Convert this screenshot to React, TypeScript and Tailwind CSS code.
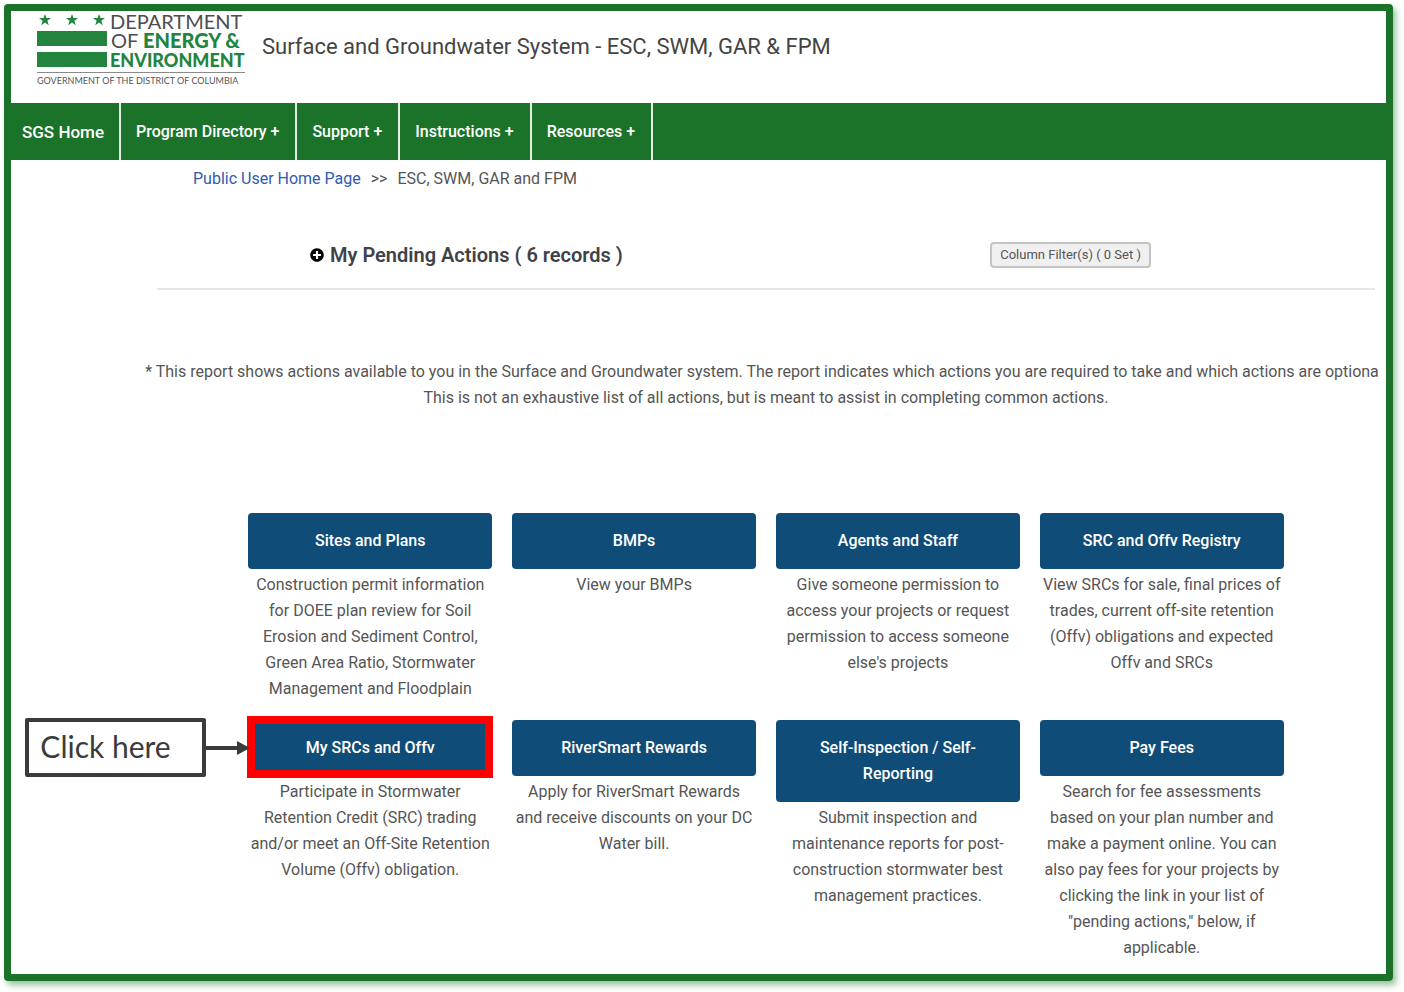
import { FaPlusCircle } from "react-icons/fa";

const NAV_ITEMS = [
  "Program Directory +",
  "Support +",
  "Instructions +",
  "Resources +",
];

const PROGRAMS = [
  {
    title: "Sites and Plans",
    desc: "Construction permit information for DOEE plan review for Soil Erosion and Sediment Control, Green Area Ratio, Stormwater Management and Floodplain",
  },
  { title: "BMPs", desc: "View your BMPs" },
  {
    title: "Agents and Staff",
    desc: "Give someone permission to access your projects or request permission to access someone else's projects",
  },
  {
    title: "SRC and Offv Registry",
    desc: "View SRCs for sale, final prices of trades, current off-site retention (Offv) obligations and expected Offv and SRCs",
  },
  {
    title: "My SRCs and Offv",
    desc: "Participate in Stormwater Retention Credit (SRC) trading and/or meet an Off-Site Retention Volume (Offv) obligation.",
    highlight: true,
  },
  {
    title: "RiverSmart Rewards",
    desc: "Apply for RiverSmart Rewards and receive discounts on your DC Water bill.",
  },
  {
    title: "Self-Inspection / Self-Reporting",
    desc: "Submit inspection and maintenance reports for post-construction stormwater best management practices.",
  },
  {
    title: "Pay Fees",
    desc: 'Search for fee assessments based on your plan number and make a payment online. You can also pay fees for your projects by clicking the link in your list of "pending actions," below, if applicable.',
  },
];

const STAR = "M0 -6 L1.5 -2 L6 -2 L2.4 0.8 L3.7 5.2 L0 2.6 L-3.7 5.2 L-2.4 0.8 L-6 -2 L-1.5 -2 Z";

function Logo() {
  return (
    <svg
      width="210"
      height="76"
      viewBox="0 0 210 76"
      fontFamily="Lato, sans-serif"
      role="img"
      aria-label="Department of Energy and Environment"
    >
      <g fill="#23843f">
        {[9, 36, 63].map((x) => (
          <path key={x} d={STAR} transform={`translate(${x} 9)`} />
        ))}
        <rect x="1" y="20" width="70" height="15" />
        <rect x="1" y="41" width="70" height="15" />
      </g>
      <g fill="#4d4d4f" fontSize="20">
        <text x="74" y="18">DEPARTMENT</text>
        <text x="75" y="37">
          OF <tspan fill="#23843f" fontWeight="900">ENERGY &amp;</tspan>
        </text>
        <text x="74" y="56" fill="#23843f" fontWeight="900" fontSize="18">
          ENVIRONMENT
        </text>
      </g>
      <rect x="1" y="61" width="208" height="1" fill="#8a8a8a" />
      <text x="1" y="73" fontSize="9" fill="#555">
        GOVERNMENT OF THE DISTRICT OF COLUMBIA
      </text>
    </svg>
  );
}

function Callout() {
  return (
    <div className="absolute right-full top-0 flex items-center -mt-0.5 -mr-0.5 w-[225px] pointer-events-none z-10">
      <div className="w-[181px] h-[59px] border-4 border-[#3b3b3b] rounded-xs bg-white pl-[11px] pb-1 flex items-center font-[Lato] text-[30px] text-[#3b3b3b]">
        Click here
      </div>
      <svg width="44" height="16" viewBox="0 0 44 16" fill="#3b3b3b">
        <rect x="0" y="6" width="33" height="4" />
        <path d="M31 1 L44 8 L31 15 Z" />
      </svg>
    </div>
  );
}

function ProgramCard({
  title,
  desc,
  highlight,
}: {
  title: string;
  desc: string;
  highlight?: boolean;
}) {
  return (
    <div className="relative text-center">
      <button className="w-full min-h-14 px-8 py-[15px] rounded bg-[#104c78] text-white font-medium">
        {title}
      </button>
      <p className="mt-[3px] px-px">{desc}</p>
      {highlight && (
        <>
          <div className="absolute -inset-x-px -top-1 h-[62px] border-8 border-[#ff0000] pointer-events-none" />
          <Callout />
        </>
      )}
    </div>
  );
}

export default function App() {
  return (
    <div className="min-h-screen bg-white pt-1 pl-1 pr-[11px] pb-[11px] font-[Roboto,sans-serif] text-base leading-[26px] text-[#555]">
      <div className="overflow-hidden rounded border-7 border-[#1a7329] shadow-[3px_4px_6px_rgba(26,115,41,0.45)]">
        <header className="flex h-23 pl-[25px] gap-4">
          <Logo />
          <h1 className="pt-5 text-[22px] leading-8 text-[#444]">
            Surface and Groundwater System - ESC, SWM, GAR &amp; FPM
          </h1>
        </header>

        <nav className="flex h-[57px] bg-[#1a7329] text-white font-medium">
          <a
            href="#"
            className="flex items-center pl-[11px] pr-[15px] text-[17px] border-r-2 border-[#e3efe4]"
          >
            SGS Home
          </a>
          {NAV_ITEMS.map((item) => (
            <button
              key={item}
              className="pl-[15px] pr-4 border-r-2 border-[#e3efe4]"
            >
              {item}
            </button>
          ))}
        </nav>

        <main className="ml-[146px] mr-[11px] pb-[13px]">
          <div className="flex gap-2.5 pt-1.5 pl-9">
            <a href="#" className="text-[#2f5bb0]">
              Public User Home Page
            </a>
            <span>&gt;&gt;</span>
            <span>ESC, SWM, GAR and FPM</span>
          </div>

          <div className="mt-[49px] flex items-center justify-between border-b-2 border-[#e6e6e6] pb-[19px] pl-[153px] pr-56">
            <h2 className="flex items-center gap-1.5 text-xl font-semibold text-[#3f4347]">
              <FaPlusCircle className="size-3.5 text-black" />
              My Pending Actions ( 6 records )
            </h2>
            <button className="h-[26px] rounded border-2 border-[#c4c4c4] bg-[#f0f0f0] px-2 text-[13px] leading-5">
              Column Filter(s) ( 0 Set )
            </button>
          </div>

          <div className="mt-[69px] flex flex-col items-center whitespace-nowrap">
            <p className="mr-2">
              * This report shows actions available to you in the Surface and
              Groundwater system. The report indicates which actions you are
              required to take and which actions are optiona
            </p>
            <p>
              This is not an exhaustive list of all actions, but is meant to
              assist in completing common actions.
            </p>
          </div>

          <div className="mx-auto mt-[102px] grid w-[85%] grid-cols-4 gap-x-5 gap-y-[18px]">
            {PROGRAMS.map((program) => (
              <ProgramCard key={program.title} {...program} />
            ))}
          </div>
        </main>
      </div>
    </div>
  );
}
